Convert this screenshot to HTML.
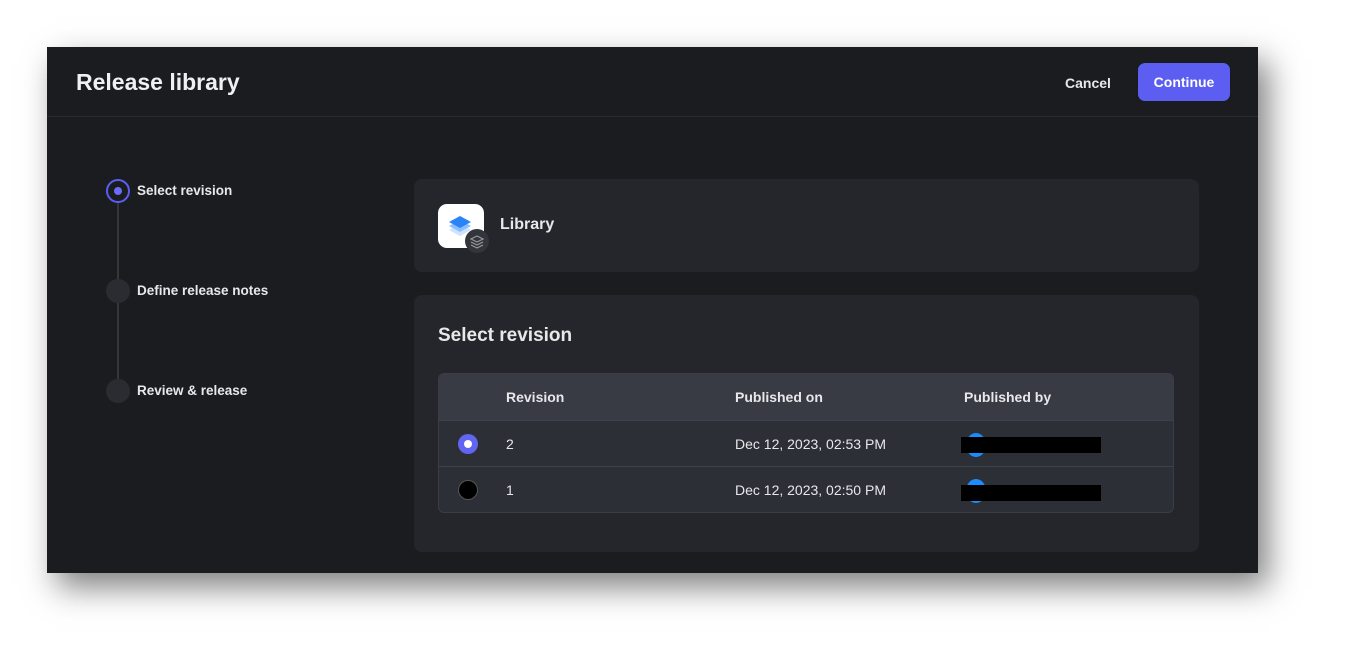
<!DOCTYPE html>
<html><head><style>
*{margin:0;padding:0;box-sizing:border-box}
body{width:1353px;height:668px;background:#fff;position:relative;overflow:hidden;font-family:"Liberation Sans",sans-serif;color:#e8e8ea}
.win{position:absolute;left:47px;top:47px;width:1211px;height:526px;background:#1b1c20;box-shadow:10px 14px 30px rgba(0,0,0,.5)}
.hdr{position:absolute;left:0;top:0;width:100%;height:70px;border-bottom:1px solid #2a2b30}
.t{position:absolute;left:29px;top:22px;font-size:23px;font-weight:bold;color:#f0f0f2}
.cancel{position:absolute;left:1018px;top:28px;font-size:14px;font-weight:bold}
.cont{position:absolute;left:1091px;top:16px;width:92px;height:38px;border-radius:7px;background:#5b5ef0;color:#fff;font-size:14px;font-weight:bold;text-align:center;line-height:38px}
.line{position:absolute;left:70px;top:154px;width:2px;height:200px;background:#34363c}
.dot{position:absolute;width:24px;height:24px;border-radius:50%;background:#2b2c31}
.step{position:absolute;left:90px;font-size:13.5px;font-weight:bold}
.card{position:absolute;left:367px;background:#25262b;border-radius:8px;width:785px}
.tbl{position:absolute;left:24px;top:78px;width:736px;height:140px;border:1px solid #3b3d45;border-radius:6px;background:#2d2f37;overflow:hidden}
.th{height:46px;background:#383a44;position:relative;font-size:14px;font-weight:bold}
.row{height:46px;border-top:1px solid #3f414a;position:relative;font-size:14px}
.c{position:absolute;top:15px}
.bar{position:absolute;left:522px;top:16px;width:140px;height:16px;background:#000}
.blu{position:absolute;left:527px;top:12px;width:20px;height:24px;border-radius:50%;background:#1a8cff}
</style></head><body>
<div class="win">
<div class="hdr"><div class="t">Release library</div><div class="cancel">Cancel</div><div class="cont">Continue</div></div>
<div class="line"></div>
<div class="dot" style="left:59px;top:132px;background:#1b1c20;border:2px solid #5b5ef0"><div style="position:absolute;left:6px;top:6px;width:8px;height:8px;border-radius:50%;background:#6a6df5"></div></div>
<div class="step" style="top:136px">Select revision</div>
<div class="dot" style="left:59px;top:232px"></div>
<div class="step" style="top:236px">Define release notes</div>
<div class="dot" style="left:59px;top:332px"></div>
<div class="step" style="top:336px">Review &amp; release</div>
<div class="card" style="top:132px;height:93px">
<div style="position:absolute;left:24px;top:25px;width:46px;height:44px;background:#fff;border-radius:9px">
<svg width="46" height="44" viewBox="0 0 46 44"><path d="M11 26l11 6 11-6-11-6z" fill="#cfe3ff"/><path d="M11 22l11 6 11-6-11-6z" fill="#8dbfff"/><path d="M11 18l11 6 11-6-11-6z" fill="#2a84f5"/></svg>
</div>
<div style="position:absolute;left:51px;top:50px;width:24px;height:24px;border-radius:50%;background:#33353c"><svg width="24" height="24" viewBox="0 0 24 24" fill="none" stroke="#999" stroke-width="1.2"><path d="M6 10l6 3 6-3-6-3z M6 13l6 3 6-3 M6 16l6 3 6-3"/></svg></div>
<div style="position:absolute;left:86px;top:37px;font-size:16px;font-weight:bold">Library</div>
</div>
<div class="card" style="top:248px;height:257px">
<div style="position:absolute;left:24px;top:30px;font-size:19px;font-weight:bold">Select revision</div>
<div class="tbl">
<div class="th"><span class="c" style="left:67px">Revision</span><span class="c" style="left:296px">Published on</span><span class="c" style="left:525px">Published by</span></div>
<div class="row"><div style="position:absolute;left:19px;top:13px;width:20px;height:20px;border-radius:50%;background:#6264f2"><div style="position:absolute;left:6px;top:6px;width:8px;height:8px;border-radius:50%;background:#fff"></div></div><span class="c" style="left:67px">2</span><span class="c" style="left:296px">Dec 12, 2023, 02:53 PM</span><div class="blu"></div><div class="bar"></div></div>
<div class="row"><div style="position:absolute;left:19px;top:13px;width:20px;height:20px;border-radius:50%;background:#000;border:1px solid #555"></div><span class="c" style="left:67px">1</span><span class="c" style="left:296px">Dec 12, 2023, 02:50 PM</span><div class="blu"></div><div class="bar" style="top:18px"></div></div>
</div>
</div>
</div>
</body></html>
